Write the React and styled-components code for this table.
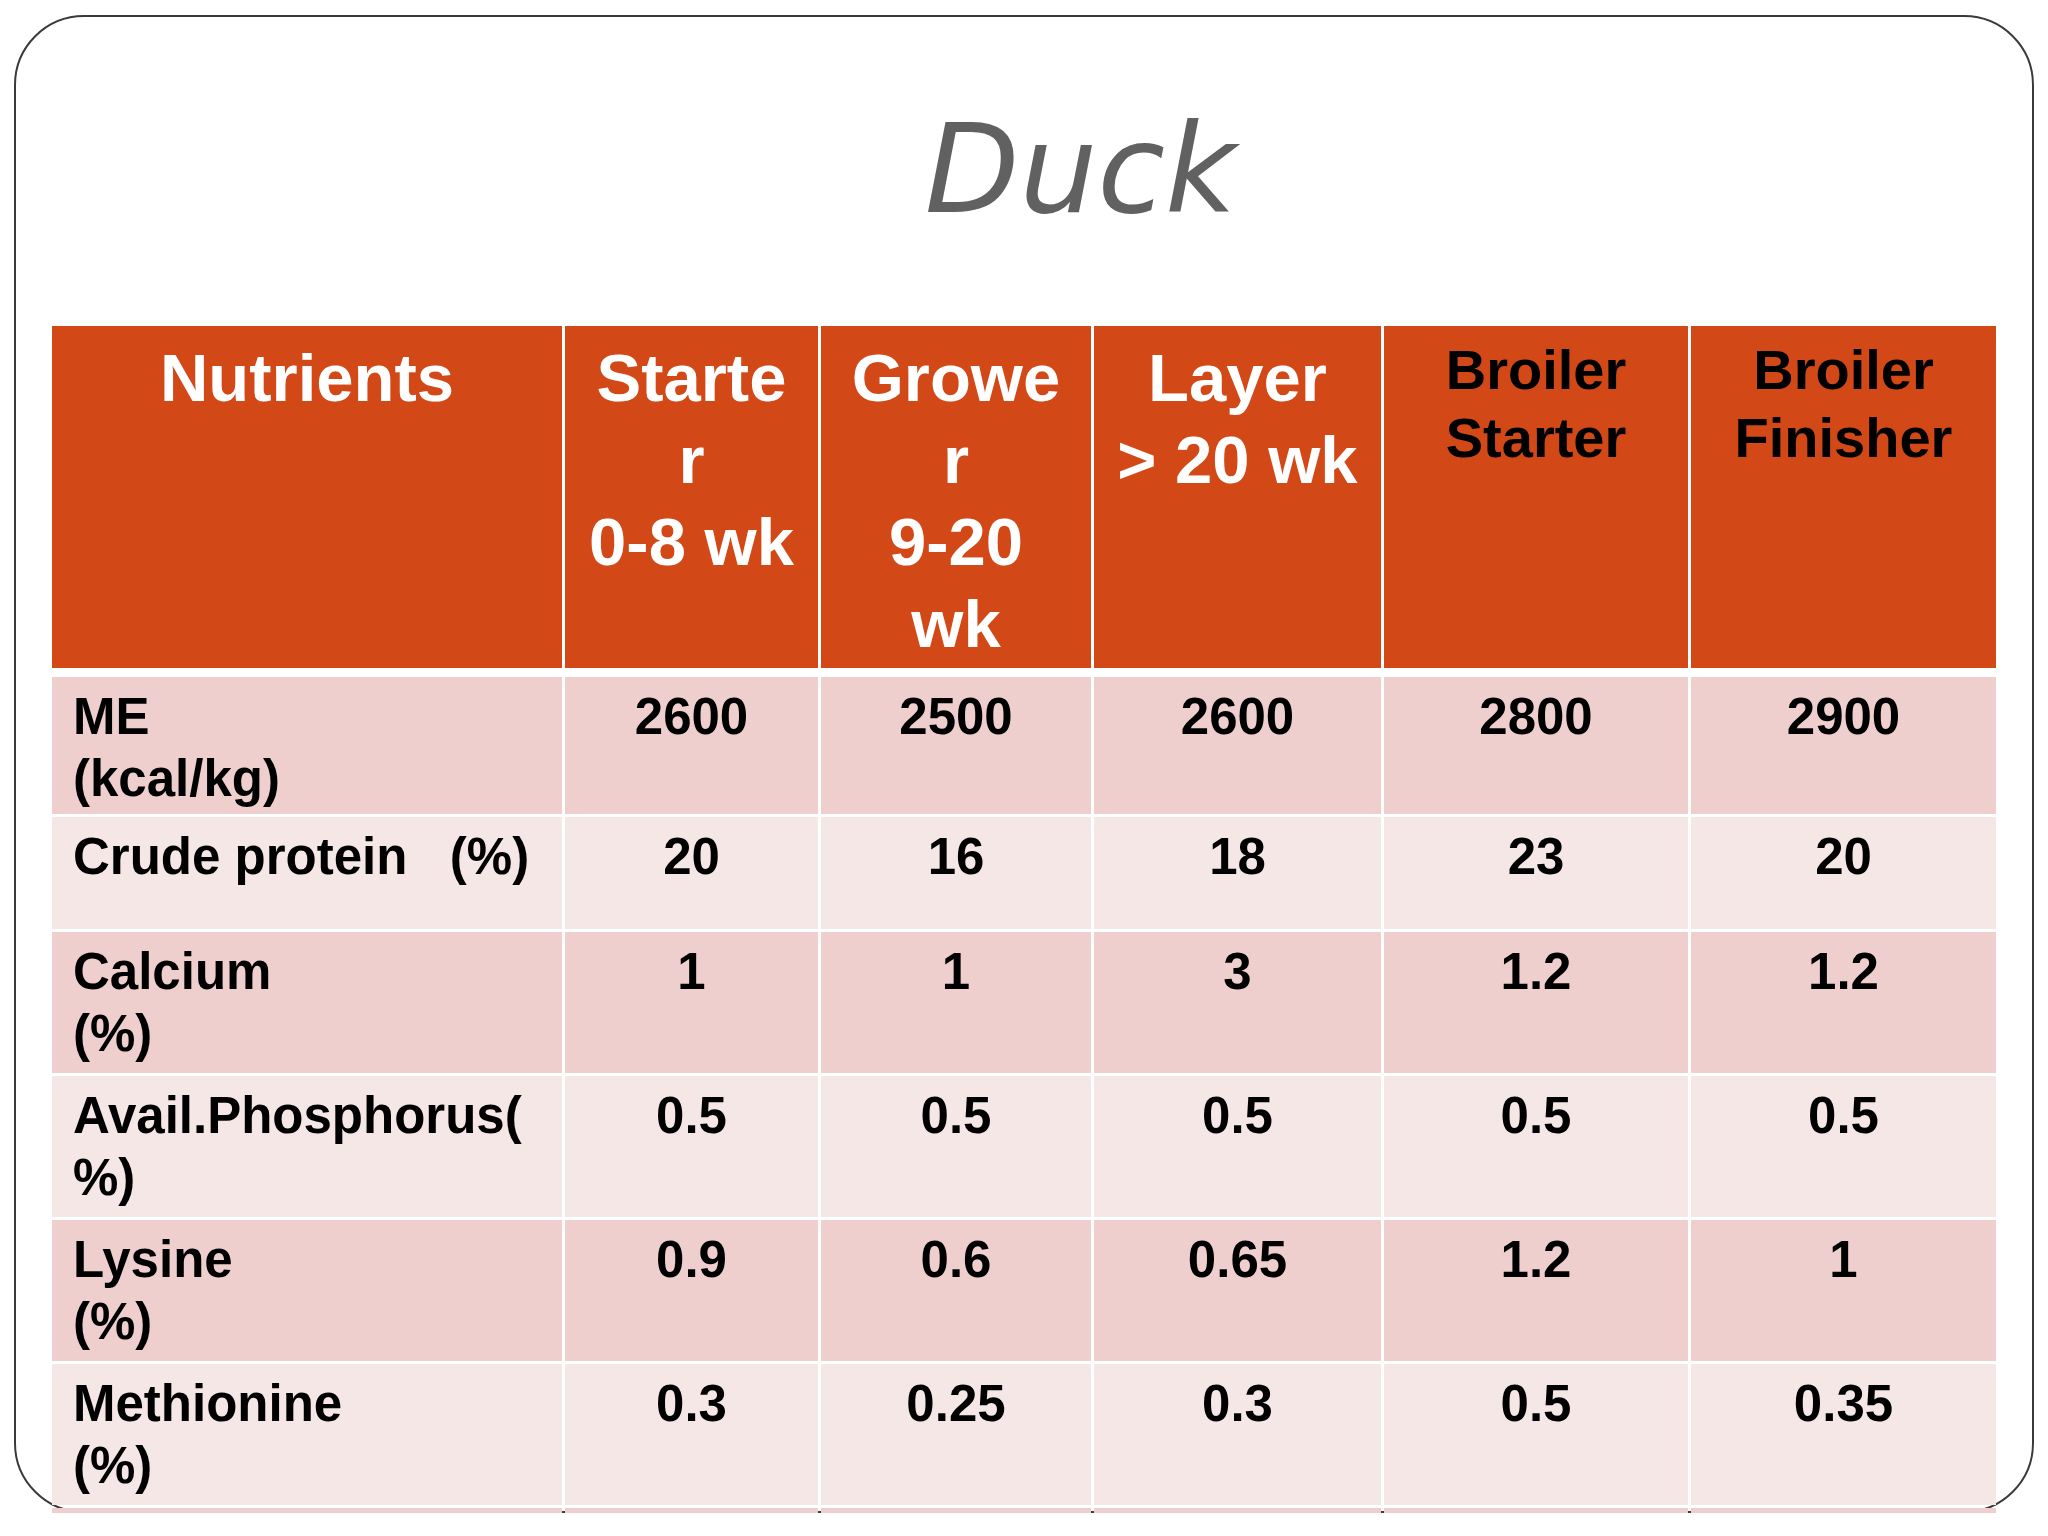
import styled, { createGlobalStyle } from "styled-components";

const GlobalStyle = createGlobalStyle`
  html,
  body {
    margin: 0;
    padding: 0;
    overflow: hidden;
    background: #ffffff;
  }
`;

const COLUMNS = "510px 253px 270px 287px 304px 305px";

const Slide = styled.div`
  box-sizing: border-box;
  width: 2020px;
  height: 1498px;
  margin: 15px 0 0 14px;
  border: 2px solid #3a3a3a;
  border-radius: 70px;
  background: #ffffff;
`;

const Title = styled.h1`
  margin: 78px 0 0;
  padding-left: 113px;
  height: 150px;
  text-align: center;
  font-family: "DejaVu Sans", "Liberation Sans", sans-serif;
  font-style: oblique;
  font-weight: normal;
  font-size: 123px;
  line-height: 150px;
  color: #616161;
`;

const Table = styled.div`
  margin: 81px 0 0 36px;
  width: 1944px;
  display: flex;
  flex-direction: column;
  gap: 3px;
  font-family: "Liberation Sans", Arial, sans-serif;
  font-weight: bold;
`;

const Row = styled.div`
  display: grid;
  grid-template-columns: ${COLUMNS};
  column-gap: 3px;
  height: ${({ $height }) => $height}px;
  margin-bottom: ${({ $head }) => ($head ? "6px" : "0")};
`;

const HeadCell = styled.div`
  background: #d34817;
  padding-top: ${({ $dark }) => ($dark ? "10px" : "11px")};
  text-align: center;
  color: ${({ $dark }) => ($dark ? "#000000" : "#ffffff")};
  font-size: ${({ $dark }) => ($dark ? "56px" : "67px")};
  line-height: ${({ $dark }) => ($dark ? "68px" : "82px")};
`;

const Cell = styled.div`
  background: ${({ $shade }) => ($shade ? "#efcfce" : "#f6e7e7")};
  padding: 9px ${({ $label }) => ($label ? "0 0 21px" : "0 0 0")};
  text-align: ${({ $label }) => ($label ? "left" : "center")};
  color: #000000;
  font-size: 51px;
  line-height: 62px;
  white-space: pre;
`;

const Line = styled.span`
  display: block;
  white-space: pre;
`;

const header = [
  { lines: ["Nutrients"] },
  { lines: ["Starte", "r", "0-8 wk"] },
  { lines: ["Growe", "r", "9-20", "wk"] },
  { lines: ["Layer", "> 20 wk"] },
  { lines: ["Broiler", "Starter"], dark: true },
  { lines: ["Broiler", "Finisher"], dark: true },
];

const rows = [
  { label: ["ME", "(kcal/kg)"], values: ["2600", "2500", "2600", "2800", "2900"], height: 137 },
  { label: ["Crude protein   (%)"], values: ["20", "16", "18", "23", "20"], height: 112 },
  { label: ["Calcium", "(%)"], values: ["1", "1", "3", "1.2", "1.2"], height: 141 },
  { label: ["Avail.Phosphorus(", "%)"], values: ["0.5", "0.5", "0.5", "0.5", "0.5"], height: 141 },
  { label: ["Lysine", "(%)"], values: ["0.9", "0.6", "0.65", "1.2", "1"], height: 141 },
  { label: ["Methionine", "(%)"], values: ["0.3", "0.25", "0.3", "0.5", "0.35"], height: 141 },
  { label: ["Salt"], values: ["0.3", "0.3", "0.3", "0.3", "0.3"], height: 141 },
];

export default function App() {
  return (
    <>
      <GlobalStyle />
      <Slide>
        <Title>Duck</Title>
        <Table>
          <Row $height={342} $head>
            {header.map((col, i) => (
              <HeadCell key={i} $dark={col.dark}>
                {col.lines.map((line, j) => (
                  <Line key={j}>{line}</Line>
                ))}
              </HeadCell>
            ))}
          </Row>
          {rows.map((row, i) => (
            <Row key={i} $height={row.height}>
              <Cell $label $shade={i % 2 === 0}>
                {row.label.map((line, j) => (
                  <Line key={j}>{line}</Line>
                ))}
              </Cell>
              {row.values.map((value, j) => (
                <Cell key={j} $shade={i % 2 === 0}>
                  {value}
                </Cell>
              ))}
            </Row>
          ))}
        </Table>
      </Slide>
    </>
  );
}
